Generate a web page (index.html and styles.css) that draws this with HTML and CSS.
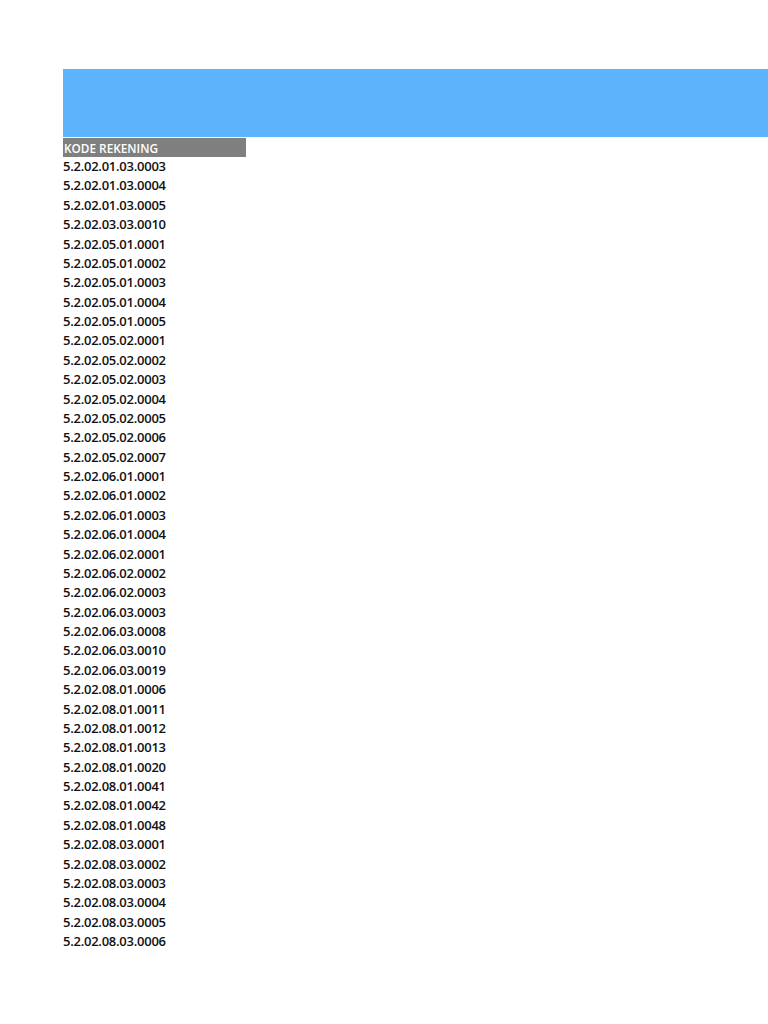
FILE: index.html
```html
<!DOCTYPE html>
<html lang="id">

<head>
    <meta charset="UTF-8">
    <meta name="viewport" content="width=device-width, initial-scale=1.0">
    <title>Kode Rekening</title>
    <link rel="stylesheet" href="styles.css">
</head>

<body>
    <div class="sheet">
        <div class="banner"></div>
        <div class="col-head">KODE REKENING</div>
        <div class="rows">
            <div class="row">5.2.02.01.03.0003</div>
            <div class="row">5.2.02.01.03.0004</div>
            <div class="row">5.2.02.01.03.0005</div>
            <div class="row">5.2.02.03.03.0010</div>
            <div class="row">5.2.02.05.01.0001</div>
            <div class="row">5.2.02.05.01.0002</div>
            <div class="row">5.2.02.05.01.0003</div>
            <div class="row">5.2.02.05.01.0004</div>
            <div class="row">5.2.02.05.01.0005</div>
            <div class="row">5.2.02.05.02.0001</div>
            <div class="row">5.2.02.05.02.0002</div>
            <div class="row">5.2.02.05.02.0003</div>
            <div class="row">5.2.02.05.02.0004</div>
            <div class="row">5.2.02.05.02.0005</div>
            <div class="row">5.2.02.05.02.0006</div>
            <div class="row">5.2.02.05.02.0007</div>
            <div class="row">5.2.02.06.01.0001</div>
            <div class="row">5.2.02.06.01.0002</div>
            <div class="row">5.2.02.06.01.0003</div>
            <div class="row">5.2.02.06.01.0004</div>
            <div class="row">5.2.02.06.02.0001</div>
            <div class="row">5.2.02.06.02.0002</div>
            <div class="row">5.2.02.06.02.0003</div>
            <div class="row">5.2.02.06.03.0003</div>
            <div class="row">5.2.02.06.03.0008</div>
            <div class="row">5.2.02.06.03.0010</div>
            <div class="row">5.2.02.06.03.0019</div>
            <div class="row">5.2.02.08.01.0006</div>
            <div class="row">5.2.02.08.01.0011</div>
            <div class="row">5.2.02.08.01.0012</div>
            <div class="row">5.2.02.08.01.0013</div>
            <div class="row">5.2.02.08.01.0020</div>
            <div class="row">5.2.02.08.01.0041</div>
            <div class="row">5.2.02.08.01.0042</div>
            <div class="row">5.2.02.08.01.0048</div>
            <div class="row">5.2.02.08.03.0001</div>
            <div class="row">5.2.02.08.03.0002</div>
            <div class="row">5.2.02.08.03.0003</div>
            <div class="row">5.2.02.08.03.0004</div>
            <div class="row">5.2.02.08.03.0005</div>
            <div class="row">5.2.02.08.03.0006</div>
        </div>
    </div>
</body>

</html>
```

FILE: styles.css
```css
body {
    margin: 0;
    padding: 0;
    background-color: #fff;
    font-family: 'Open Sans', 'Liberation Sans', sans-serif;
    color: #111;
}

.sheet {
    padding-top: 69px;
    padding-left: 63px;
}

.banner {
    height: 68px;
    background-color: #5eb3fd;
}

.col-head {
    width: 183px;
    height: 19px;
    margin-top: 1px;
    background-color: #7f7f7f;
    color: #fff;
    font-size: 11.8px;
    font-weight: 600;
    line-height: 20px;
    padding-left: 1px;
    box-sizing: border-box;
}

.row {
    height: 19.375px;
    line-height: 19.375px;
    font-size: 13px;
    font-weight: 600;
    letter-spacing: -0.25px;
}
```
